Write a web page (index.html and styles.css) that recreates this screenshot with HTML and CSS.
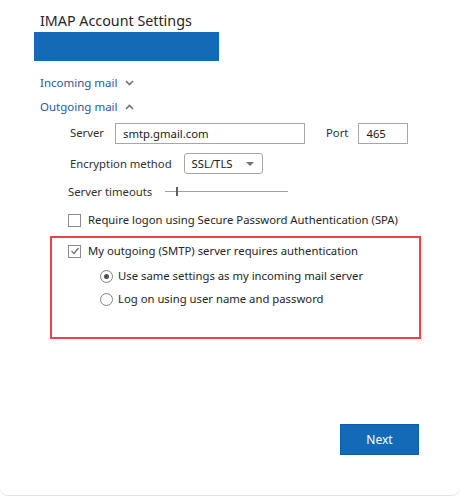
FILE: index.html
```html
<!DOCTYPE html>
<html>
<head>
<meta charset="utf-8">
<link rel="stylesheet" href="styles.css">
</head>
<body>
<div class="window">
  <h1 class="title">IMAP Account Settings</h1>
  <div class="bar"></div>
  <div class="section-link"><span>Incoming mail</span>
    <svg class="chev" width="9" height="6" viewBox="0 0 9 6"><path d="M1 1 L4.5 4.5 L8 1" fill="none" stroke="#707070" stroke-width="1.6"/></svg>
  </div>
  <div class="section-link second"><span>Outgoing mail</span>
    <svg class="chev" width="9" height="6" viewBox="0 0 9 6"><path d="M1 5 L4.5 1.5 L8 5" fill="none" stroke="#707070" stroke-width="1.6"/></svg>
  </div>
  <div class="fields">
    <div class="row server-row">
      <label class="lbl">Server</label>
      <div class="input server-input">smtp.gmail.com</div>
      <label class="lbl port-lbl">Port</label>
      <div class="input port-input">465</div>
    </div>
    <div class="row enc-row">
      <label class="lbl">Encryption method</label>
      <div class="select">SSL/TLS<svg width="8" height="4" viewBox="0 0 8 4"><path d="M0 0 H8 L4 4 Z" fill="#707070"/></svg></div>
    </div>
    <div class="row timeout-row">
      <label class="lbl">Server timeouts</label>
      <div class="slider"><div class="track"></div><div class="thumb"></div></div>
    </div>
    <div class="row check-row">
      <span class="box"></span>
      <span>Require logon using Secure Password Authentication (SPA)</span>
    </div>
  </div>
  <div class="highlight">
    <div class="row check-row">
      <span class="box"><svg width="10" height="10" viewBox="0 0 10 10"><path d="M1.5 5 L4 7.5 L8.5 2" fill="none" stroke="#707070" stroke-width="1.2"/></svg></span>
      <span>My outgoing (SMTP) server requires authentication</span>
    </div>
    <div class="row radio-row first">
      <span class="radio on"></span>
      <span>Use same settings as my incoming mail server</span>
    </div>
    <div class="row radio-row">
      <span class="radio"></span>
      <span>Log on using user name and password</span>
    </div>
  </div>
  <div class="footer">
    <button class="next">Next</button>
  </div>
</div>
</body>
</html>
```
FILE: styles.css
```css
html, body {
  margin: 0;
  padding: 0;
  background: #ffffff;
}
body {
  font-family: "Noto Sans", "Open Sans", sans-serif;
  font-size: 11.3px;
  line-height: 16px;
  color: #262626;
}
.window {
  width: 460px;
  height: 496px;
  box-sizing: border-box;
  padding: 10px 0 0 40px;
  position: relative;
  border-radius: 0 0 8px 8px;
  box-shadow: inset 0 -1px 0 #e4e4e4;
}
.title {
  margin: 0;
  font-size: 14.3px;
  font-weight: normal;
  color: #262626;
  line-height: 22px;
}
.bar {
  width: 185px;
  height: 29px;
  margin: 0 0 0 -6px;
  background: #136bb8;
}
.section-link {
  display: flex;
  align-items: center;
  gap: 7px;
  color: #2b5797;
  font-size: 11.5px;
  line-height: 18px;
  margin-top: 13px;
}
.section-link.second {
  margin-top: 6px;
}
.fields {
  padding-left: 30px;
  margin-top: 6px;
}
.row {
  display: flex;
  align-items: center;
}
.lbl {
  color: #303030;
}
.input {
  border: 1px solid #a6a6a6;
  height: 19px;
  line-height: 19px;
  box-sizing: content-box;
  padding-left: 7px;
  color: #202020;
}
.server-input {
  width: 181px;
  margin-left: 11px;
}
.port-lbl {
  margin-left: 21px;
}
.port-input {
  width: 41px;
  margin-left: 10px;
  margin-top: 1px;
}
.enc-row {
  margin-top: 9px;
}
.select {
  margin-left: 12px;
  width: 62px;
  height: 19px;
  border: 1px solid #a6a6a6;
  border-radius: 3px;
  padding-left: 7px;
  display: flex;
  align-items: center;
  justify-content: space-between;
  padding-right: 8px;
  color: #202020;
}
.timeout-row {
  margin-top: 10px;
}
.timeout-row .lbl {
  margin-left: -2px;
}
.slider {
  position: relative;
  width: 123px;
  height: 14px;
  margin-left: 13px;
}
.track {
  position: absolute;
  left: 0;
  right: 0;
  top: 6px;
  height: 1px;
  background: #a0a0a0;
}
.thumb {
  position: absolute;
  left: 11px;
  top: 2px;
  width: 2px;
  height: 9px;
  background: #606060;
}
.check-row {
  margin-top: 12px;
  gap: 7px;
  margin-left: -2px;
}
.box {
  width: 11px;
  height: 11px;
  border: 1px solid #8c8c8c;
  display: flex;
  align-items: center;
  justify-content: center;
}
.highlight {
  margin: 8px 0 0 10px;
  width: 349px;
  height: 99px;
  border: 2px solid #ef4145;
  box-sizing: content-box;
  padding-left: 18px;
}
.highlight .check-row {
  margin-top: 5px;
}
.radio-row {
  padding-left: 32px;
  gap: 5px;
  margin-left: -2px;
}
.radio-row.first {
  margin-top: 9px;
}
.radio-row + .radio-row {
  margin-top: 7px;
}
.radio {
  width: 11px;
  height: 11px;
  border: 1px solid #808080;
  border-radius: 50%;
  position: relative;
}
.radio.on::after {
  content: "";
  position: absolute;
  left: 3px;
  top: 3px;
  width: 5px;
  height: 5px;
  border-radius: 50%;
  background: #505050;
}
.footer {
  display: flex;
  justify-content: flex-end;
  padding-right: 41px;
  margin-top: 85px;
}
.next {
  width: 79px;
  height: 31px;
  background: #136bb8;
  border: 1px solid #0f5da5;
  color: #ffffff;
  font-family: "Noto Sans", "Open Sans", sans-serif;
  font-size: 12px;
}
```
